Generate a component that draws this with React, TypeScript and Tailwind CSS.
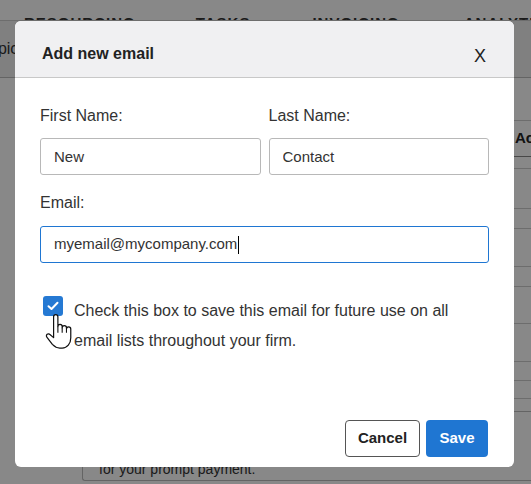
import React from 'react';

const navItems = ['Resourcing', 'Tasks', 'Invoicing', 'Analytics'];

// row heights of the table behind the dialog (only the right edge shows)
const rowHeights = [12, 40, 20, 38, 20, 37, 38, 19, 18];

const HandCursor: React.FC = () => (
  <svg width="27" height="37" viewBox="0 0 22 30" className="absolute left-[2px] top-[17px]">
    <path
      d="M7 14 V3 A1.75 1.75 0 0 1 10.5 3 V11 A1.75 1.75 0 0 1 14 11 V12 A1.75 1.75 0 0 1 17.5 12 V13 A1.75 1.75 0 0 1 21 13 V20 C21 25 18 28.5 14 28.5 H12 C9 28.5 7.5 27 6 25.5 L1.5 19.5 A1.6 1.6 0 0 1 4 17.5 L7 20 Z"
      fill="#fff"
      stroke="#111"
      strokeWidth="1"
      strokeLinejoin="round"
    />
    <path d="M10.5 11 V16 M14 12 V16 M17.5 13 V16" stroke="#111" strokeWidth="0.9" fill="none" />
  </svg>
);

const App: React.FC = () => {
  return (
    <div className="relative h-[484px] w-[531px] overflow-hidden bg-white font-['Liberation_Sans',Arial,sans-serif] text-[#333]">
      {/* page behind the dialog */}
      <nav className="h-[21px] overflow-hidden border-b border-[#ccc]">
        <div className="flex pt-[14px] text-[15px] font-bold uppercase leading-[18px] tracking-[1px] text-[#333]">
          <span className="ml-[24px]">{navItems[0]}</span>
          <span className="ml-[60px]">{navItems[1]}</span>
          <span className="ml-[62px]">{navItems[2]}</span>
          <span className="ml-[64px]">{navItems[3]}</span>
        </div>
      </nav>
      <div className="flex h-[57px] items-center border-b border-[#bbb] bg-[#f0f0f0]">
        <span className="ml-[-19px] text-[16px]">Topic</span>
      </div>

      <div className="ml-[82px]">
        <div className="h-[43px] border-b border-[#ccc]" />
        <div className="grid h-[36px] grid-cols-[433px_1fr] items-center border-b border-[#888] text-[15px] font-bold text-[#222]">
          <span>Description</span>
          <span>Actions</span>
        </div>
        {rowHeights.map((h, i) => (
          <div key={i} className="border-b border-[#ccc]" style={{ height: h }} />
        ))}
        <div className="mt-[12px] h-[70px] rounded-bl-[3px] border-b border-l border-t border-[#bbb] px-[16px] pt-[9px] text-[14px] leading-[19.5px] text-[#333]">
          <p className="whitespace-nowrap">Thank you for your business. Please remit the balance</p>
          <p className="whitespace-nowrap">due within thirty days of the invoice date shown in a</p>
          <p className="whitespace-nowrap">for your prompt payment.</p>
        </div>
      </div>

      {/* dim overlay */}
      <div className="absolute inset-0 bg-black/[0.467]" />

      {/* dialog */}
      <div className="absolute left-[15px] top-[21px] flex h-[446px] w-[499px] flex-col overflow-hidden rounded-[6px] bg-white">
        <div className="flex h-[57px] items-center justify-between border-b border-[#c8c8c8] bg-[#f0f0f2] pl-[27px] pr-[28px] pt-[10px]">
          <h2 className="text-[16px] font-bold leading-[20px] text-[#222]">Add new email</h2>
          <button className="mt-[3px] text-[18px] leading-[20px] text-[#222]">X</button>
        </div>

        <div className="px-[25px] pt-[28px]">
          <div className="grid grid-cols-2 gap-x-[8px]">
            <div>
              <label className="block text-[16px] leading-[20px] text-[#333]">First Name:</label>
              <input
                readOnly
                value="New"
                className="mt-[12px] h-[37px] w-full rounded-[3px] border border-[#b8b8b8] px-[13px] text-[15px] text-[#333] outline-none"
              />
            </div>
            <div>
              <label className="block text-[16px] leading-[20px] text-[#333]">Last Name:</label>
              <input
                readOnly
                value="Contact"
                className="mt-[12px] h-[37px] w-full rounded-[3px] border border-[#b8b8b8] px-[13px] text-[15px] text-[#333] outline-none"
              />
            </div>
          </div>

          <label className="mt-[18px] block text-[16px] leading-[20px] text-[#333]">Email:</label>
          <div className="mt-[13px] flex h-[37px] items-center rounded-[3px] border border-[#1f76d2] px-[13px] text-[15px] text-[#333]">
            <span>myemail@mycompany.com</span>
            <span className="ml-px h-[18px] w-px bg-black" />
          </div>

          <div className="mt-[33px] flex gap-[11px]">
            <div className="relative ml-[3px] shrink-0">
              <div className="flex h-[20px] w-[20px] items-center justify-center rounded-[3px] bg-[#2579d3]">
                <svg width="12" height="10" viewBox="0 0 12 10">
                  <path d="M1.5 5.2 L4.5 8 L10.5 1.8" stroke="#fff" strokeWidth="2" fill="none" strokeLinecap="round" strokeLinejoin="round" />
                </svg>
              </div>
              <HandCursor />
            </div>
            <p className="text-[16px] leading-[29.5px] text-[#333]">
              Check this box to save this email for future use on all email lists throughout your firm.
            </p>
          </div>
        </div>

        <div className="mt-auto flex justify-end gap-[6px] px-[26px] pb-[10px]">
          <button className="h-[37px] w-[75px] rounded-[4px] border border-[#555] bg-white text-[15px] font-bold text-[#222]">
            Cancel
          </button>
          <button className="h-[37px] w-[62px] rounded-[4px] bg-[#1f76d2] text-[15px] font-bold text-white">
            Save
          </button>
        </div>
      </div>
    </div>
  );
};

export default App;
